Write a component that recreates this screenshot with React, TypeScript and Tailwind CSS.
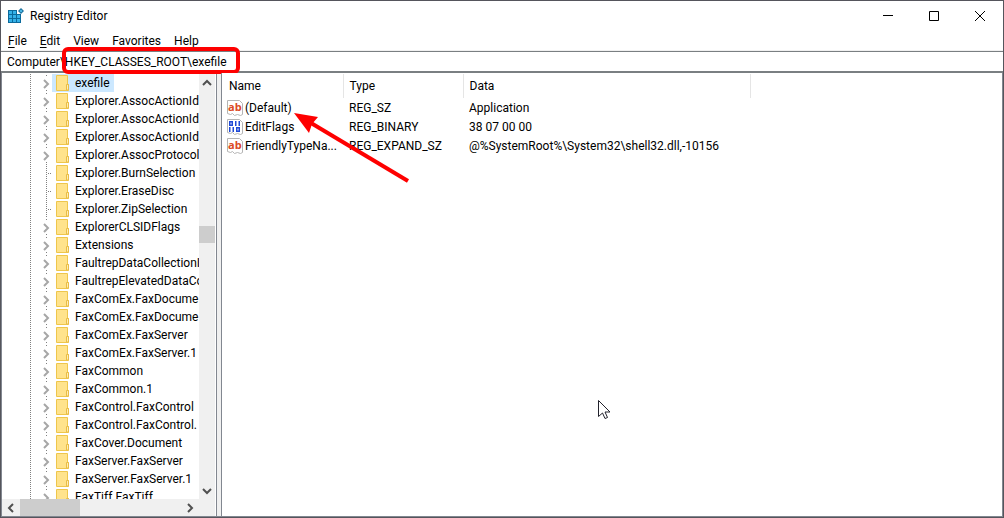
import { useState } from "react";

type TreeItem = { name: string; leaf?: boolean };

const treeItems: TreeItem[] = [
  { name: "exefile" },
  { name: "Explorer.AssocActionId" },
  { name: "Explorer.AssocActionId" },
  { name: "Explorer.AssocActionId" },
  { name: "Explorer.AssocProtocol" },
  { name: "Explorer.BurnSelection", leaf: true },
  { name: "Explorer.EraseDisc", leaf: true },
  { name: "Explorer.ZipSelection", leaf: true },
  { name: "ExplorerCLSIDFlags" },
  { name: "Extensions" },
  { name: "FaultrepDataCollectionI" },
  { name: "FaultrepElevatedDataCo" },
  { name: "FaxComEx.FaxDocume" },
  { name: "FaxComEx.FaxDocume" },
  { name: "FaxComEx.FaxServer" },
  { name: "FaxComEx.FaxServer.1" },
  { name: "FaxCommon" },
  { name: "FaxCommon.1" },
  { name: "FaxControl.FaxControl" },
  { name: "FaxControl.FaxControl." },
  { name: "FaxCover.Document" },
  { name: "FaxServer.FaxServer" },
  { name: "FaxServer.FaxServer.1" },
  { name: "FaxTiff.FaxTiff" },
];

const values = [
  { name: "(Default)", type: "REG_SZ", data: "Application", binary: false },
  { name: "EditFlags", type: "REG_BINARY", data: "38 07 00 00", binary: true },
  {
    name: "FriendlyTypeNa...",
    type: "REG_EXPAND_SZ",
    data: "@%SystemRoot%\\System32\\shell32.dll,-10156",
    binary: false,
  },
];

const menus = [
  { before: "", key: "F", after: "ile" },
  { before: "", key: "E", after: "dit" },
  { before: "", key: "V", after: "iew" },
  { before: "F", key: "a", after: "vorites" },
  { before: "", key: "H", after: "elp" },
];

function AppIcon() {
  return (
    <svg width="16" height="16" viewBox="0 0 16 16" aria-hidden="true">
      <path d="M0 2h9v4h4v9H0z" fill="#0b6a9c" />
      <path
        d="M1 3h3v3H1zM5 3h3v3H5zM1 7h3v3H1zM5 7h3v3H5zM9 7h3v3H9zM1 11h3v3H1zM5 11h3v3H5zM9 11h3v3H9z"
        fill="#35b1e8"
      />
      <path d="M13 0l3 3-3 3-3-3z" fill="#1b6f9b" />
      <path d="M13 1.500l1.500 1.500-1.500 1.500L11.500 3z" fill="#4fc0ee" />
    </svg>
  );
}

function FolderIcon() {
  return (
    <svg width="13" height="16" viewBox="0 0 13 16" className="shrink-0" aria-hidden="true">
      <path d="M.5.5h11v9h1v6H.5z" fill="#ffe38c" stroke="#eec64c" />
      <path d="M10.500 15V9.500h2V15z" fill="#ffedb5" stroke="#e9bd45" />
    </svg>
  );
}

function ValueIcon({ binary }: { binary: boolean }) {
  return (
    <svg width="16" height="16" viewBox="0 0 16 16" className="shrink-0" aria-hidden="true">
      <path d="M.5.5h12l3 3v11l-2 1-3-1-3 1-2-2-2 1-3-1z" fill="#fff" stroke="#b4b4b4" />
      {binary ? (
        <g fill="none" stroke="#1f49d6" strokeWidth="1.500">
          <path d="M2.750 2.750h2.500v3.500h-2.500zM8.750 2v5M12.250 2v5M2.750 8v5M6.250 8v5M9.750 8.750h2.500v3.500h-2.500z" />
        </g>
      ) : (
        <text x="1" y="11" fill="#dc4a25" className="font-['Open_Sans'] text-[11px] font-bold">
          ab
        </text>
      )}
    </svg>
  );
}

function Branch({ leaf }: { leaf?: boolean }) {
  return (
    <svg width="12" height="18" viewBox="0 0 12 18" fill="none" className="block" aria-hidden="true">
      {leaf ? (
        <path d="M6.500 0v18M8 9.500h4" stroke="#808080" strokeDasharray="1 1" />
      ) : (
        <>
          <path d="M6 1h1v1H6zM6 16h1v1H6z" fill="#808080" />
          <path d="M4 6l4 4-4 4" stroke="#a6a6a6" strokeWidth="2" />
        </>
      )}
    </svg>
  );
}

function ScrollArrow({ d, label, className }: { d: string; label: string; className: string }) {
  return (
    <button type="button" aria-label={label} className={`flex shrink-0 items-center justify-center ${className}`}>
      <svg width="10" height="10" viewBox="0 0 10 10" fill="none" aria-hidden="true">
        <path d={d} stroke="#505050" strokeWidth="2" />
      </svg>
    </button>
  );
}

function Tree() {
  const [selected, setSelected] = useState(0);

  return (
    <nav aria-label="Keys" className="flex w-[215px] shrink-0 flex-col border-r border-[#828790] bg-white pt-px pr-px">
      <div className="flex min-h-0 flex-1">
        <ul className="min-w-0 flex-1 overflow-hidden">
          {treeItems.map((item, i) => (
            <li key={i} className="flex h-[18px] items-center">
              <svg width="38" height="18" className="shrink-0" aria-hidden="true">
                <path d="M28.500 0v18" stroke="#808080" strokeDasharray="1 1" />
              </svg>
              {item.leaf ? (
                <span className="shrink-0">
                  <Branch leaf />
                </span>
              ) : (
                <button type="button" aria-label={`Expand ${item.name}`} className="shrink-0">
                  <Branch />
                </button>
              )}
              <button
                type="button"
                onClick={() => setSelected(i)}
                className={`flex h-[18px] shrink-0 items-center gap-1.5 px-1 whitespace-nowrap ${
                  selected === i ? "bg-[#cce8ff]" : ""
                }`}
              >
                <FolderIcon />
                {item.name}
              </button>
            </li>
          ))}
        </ul>
        <div className="flex w-4 shrink-0 flex-col bg-[#f0f0f0]">
          <ScrollArrow label="Scroll up" d="M1 7l4-4 4 4" className="h-[17px]" />
          <div className="flex-[135]" />
          <div className="h-[17px] bg-[#cdcdcd]" />
          <div className="flex-[238]" />
          <ScrollArrow label="Scroll down" d="M1 3l4 4 4-4" className="h-[17px]" />
        </div>
      </div>
      <div className="flex h-[17px] bg-[#f0f0f0]">
        <ScrollArrow label="Scroll left" d="M7 1L3 5l4 4" className="w-[18px]" />
        <div className="w-[60px] bg-[#cdcdcd]" />
        <div className="flex-1" />
        <ScrollArrow label="Scroll right" d="M3 1l4 4-4 4" className="mr-4 w-[18px]" />
      </div>
    </nav>
  );
}

function Values() {
  return (
    <main className="relative min-w-0 flex-1 overflow-hidden border-l border-[#828790] bg-white pt-px">
      <table className="w-[529px] table-fixed border-collapse text-left">
        <thead>
          <tr className="h-6">
            <th className="w-[121px] border-r border-[#e5e5e5] pl-[7px] font-normal">Name</th>
            <th className="w-[120px] border-r border-[#e5e5e5] pl-1.5 font-normal">Type</th>
            <th className="border-r border-[#e5e5e5] pl-1.5 font-normal">Data</th>
          </tr>
        </thead>
        <tbody>
          {values.map((value) => (
            <tr key={value.name} className="h-[19px] whitespace-nowrap">
              <td className="pl-[5px]">
                <span className="flex items-center gap-0.5">
                  <ValueIcon binary={value.binary} />
                  {value.name}
                </span>
              </td>
              <td className="pl-1.5">{value.type}</td>
              <td className="pl-1.5">{value.data}</td>
            </tr>
          ))}
        </tbody>
      </table>

      {/* Arrow pointing at the default value */}
      <svg width="120" height="76" viewBox="0 0 120 76" className="absolute top-[38px] left-[71px]" aria-hidden="true">
        <path d="M18 12l97 58" stroke="#fe0000" strokeWidth="4" />
        <path d="M1 2l24 4-6 7-3 9z" fill="#fe0000" />
      </svg>

      {/* Mouse pointer */}
      <svg width="13" height="20" viewBox="0 0 13 20" className="absolute top-[327px] left-[376px]" aria-hidden="true">
        <path d="M.5.5v16l4-3.500 2.500 5.500 2.500-1-2.500-5.500h5z" fill="#fff" stroke="#22222c" />
      </svg>
    </main>
  );
}

export default function App() {
  const [address, setAddress] = useState("Computer\\HKEY_CLASSES_ROOT\\exefile");

  return (
    <div className="flex h-screen flex-col border border-[#55555c] bg-white font-[Roboto,sans-serif] text-[12px] leading-4 text-black">
      <header className="flex h-[30px] shrink-0 items-center pl-[7px]">
        <AppIcon />
        <h1 className="ml-1.5 flex-1">Registry Editor</h1>
        <button type="button" aria-label="Minimize" className="flex h-full w-[46px] items-center justify-center">
          <svg width="10" height="10" aria-hidden="true">
            <path d="M0 4.500h10" stroke="#000" />
          </svg>
        </button>
        <button type="button" aria-label="Maximize" className="flex h-full w-[46px] items-center justify-center">
          <svg width="10" height="10" fill="none" aria-hidden="true">
            <path d="M.5.5h9v9h-9z" stroke="#000" />
          </svg>
        </button>
        <button type="button" aria-label="Close" className="flex h-full w-[46px] items-center justify-center">
          <svg width="10" height="10" fill="none" aria-hidden="true">
            <path d="M0 0l10 10M10 0L0 10" stroke="#000" />
          </svg>
        </button>
      </header>

      <div role="menubar" className="flex h-5 shrink-0 items-center gap-[13px] border-b border-[#f0f0f0] pl-[7px]">
        {menus.map((menu) => (
          <button key={menu.key} type="button" role="menuitem">
            {menu.before}
            <span className="underline underline-offset-2">{menu.key}</span>
            {menu.after}
          </button>
        ))}
      </div>

      <div className="relative h-[22px] shrink-0 border-t border-b-2 border-[#7a7f82]">
        <input
          aria-label="Address"
          value={address}
          onChange={(e) => setAddress(e.target.value)}
          className="block h-full w-full pl-1.5 outline-none"
        />
        <div className="pointer-events-none absolute -top-[5px] left-[61px] h-[27px] w-[178px] rounded-md border-4 border-[#fe0000]" />
      </div>

      <div className="flex min-h-0 flex-1 border-x border-b border-[#828790] bg-[#f0f0f0]">
        <Tree />
        <div className="w-1" />
        <Values />
      </div>
    </div>
  );
}
